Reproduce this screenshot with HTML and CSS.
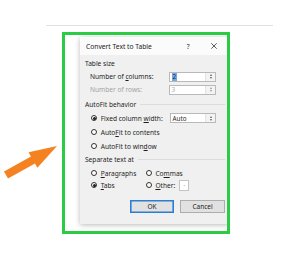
FILE: index.html
```html
<!DOCTYPE html>
<html>
<head>
<meta charset="utf-8">
<link rel="stylesheet" href="styles.css">
</head>
<body>
<div class="rule"></div>
<div class="frame">
  <div class="dialog">
    <div class="titlebar">
      <span class="title">Convert Text to Table</span>
      <span class="help">?</span>
      <svg class="close" width="6" height="6" viewBox="0 0 6 6"><path d="M0.3 0.3 L5.7 5.7 M5.7 0.3 L0.3 5.7" stroke="#333" stroke-width="0.8" fill="none"/></svg>
    </div>
    <div class="body">
      <div class="section">Table size</div>
      <div class="row">
        <span class="label">Number of <u>c</u>olumns:</span>
        <div class="spin"><div class="field"><span class="sel">2</span></div><div class="arrows"><i class="up"></i><i class="down"></i></div></div>
      </div>
      <div class="row disabled">
        <span class="label">Number of rows:</span>
        <div class="spin"><div class="field">3</div><div class="arrows"><i class="up"></i><i class="down"></i></div></div>
      </div>
      <div class="section gap"><span>AutoFit behavior</span><span class="line"></span></div>
      <div class="rrow">
        <span class="radio on"></span><span class="label">Fixed column <u>w</u>idth:</span>
        <div class="spin wide"><div class="field">Auto</div><div class="arrows"><i class="up"></i><i class="down"></i></div></div>
      </div>
      <div class="rrow"><span class="radio"></span><span class="label">Auto<u>F</u>it to contents</span></div>
      <div class="rrow"><span class="radio"></span><span class="label">AutoFit to win<u>d</u>ow</span></div>
      <div class="section"><span>Separate text at</span><span class="line"></span></div>
      <div class="grid">
        <div class="cell"><span class="radio"></span><span class="label"><u>P</u>aragraphs</span></div>
        <div class="cell"><span class="radio"></span><span class="label">Co<u>m</u>mas</span></div>
        <div class="cell"><span class="radio on"></span><span class="label"><u>T</u>abs</span></div>
        <div class="cell"><span class="radio"></span><span class="label"><u>O</u>ther:</span><span class="other">-</span></div>
      </div>
      <div class="buttons">
        <div class="btn ok">OK</div>
        <div class="btn">Cancel</div>
      </div>
    </div>
  </div>
</div>
<svg class="arrow" width="60" height="40" viewBox="0 144 60 40">
  <polygon points="57,146 28.6,152.2 31,156.5 4,171.5 8,178.5 35,163.5 37.4,167.8" fill="#f58220"/>
</svg>
</body>
</html>
```
FILE: styles.css
```css
html, body {
  margin: 0;
  padding: 0;
  background: #ffffff;
}
body {
  width: 300px;
  height: 273px;
  overflow: hidden;
  position: relative;
  font-family: "Noto Sans", "Open Sans", sans-serif;
  font-size: 6.6px;
  color: #1e1e1e;
}
.rule {
  margin: 25px 27px 0 46px;
  height: 1px;
  background: #e2e2e2;
}
.frame {
  margin: 6px 0 0 62px;
  width: 162px;
  height: 194px;
  border: 3px solid #2bcb45;
  padding: 2px 0 0 15px;
  box-sizing: content-box;
  width: 147px;
  overflow: hidden;
}
.dialog {
  width: 150px;
  height: 187px;
  background: #f0f0f0;
  box-shadow: 0 1px 5px rgba(0,0,0,0.28);
  display: flex;
  flex-direction: column;
}
.titlebar {
  height: 18px;
  background: #fbfbfb;
  display: flex;
  align-items: center;
  padding-left: 6px;
  font-size: 6.7px;
  color: #222;
}
.title { flex: 1; }
.help { margin-right: 21px; font-size: 6.5px; }
.close { margin-right: 13.5px; }
.body {
  flex: 1;
  padding: 2px 5px 0 5px;
  display: flex;
  flex-direction: column;
}
.section {
  height: 13px;
  display: flex;
  align-items: center;
  gap: 4px;
}
.section.gap { margin-top: 2px; }
.line {
  flex: 1;
  height: 1px;
  background: #dcdcdc;
}
.row {
  height: 13px;
  display: flex;
  align-items: center;
  padding-left: 5px;
}
.row .label { flex: 1; }
.disabled { color: #a3a3a3; }
.spin {
  width: 47px;
  height: 10px;
  display: flex;
  margin-right: 9px;
  border: 1px solid #b9b9b9;
  box-sizing: border-box;
  background: #fff;
}
.spin.wide { width: 46px; }
.field {
  flex: 1;
  display: flex;
  align-items: center;
  padding-left: 1.5px;
  font-size: 6.3px;
}
.sel {
  background: #74a9e4;
  color: #0c2a55;
  padding: 0 1px;
  line-height: 8px;
}
.disabled .field { color: #a8a8a8; }
.arrows {
  width: 9px;
  background: #f3f3f3;
  border-left: 1px solid #e3e3e3;
  display: flex;
  flex-direction: column;
  align-items: center;
  justify-content: center;
  gap: 1px;
}
.arrows i {
  width: 0;
  height: 0;
  border-left: 1.5px solid transparent;
  border-right: 1.5px solid transparent;
}
.arrows .up { border-bottom: 2px solid #606060; }
.arrows .down { border-top: 2px solid #606060; }
.disabled .arrows .up { border-bottom-color: #9a9a9a; }
.disabled .arrows .down { border-top-color: #9a9a9a; }
.rrow {
  height: 14px;
  display: flex;
  align-items: center;
  padding-left: 6px;
}
.rrow .label { flex: 1; }
.radio {
  width: 6px;
  height: 6px;
  border: 0.8px solid #333;
  border-radius: 50%;
  box-sizing: border-box;
  background: #fff;
  margin-right: 3.7px;
  display: flex;
  align-items: center;
  justify-content: center;
  flex: none;
}
.radio.on::after {
  content: "";
  width: 3px;
  height: 3px;
  border-radius: 50%;
  background: #1e1e1e;
}
.grid {
  display: grid;
  grid-template-columns: 54.7px 1fr;
  grid-auto-rows: 12px;
  padding-left: 6px;
  margin-top: 1px;
}
.cell {
  display: flex;
  align-items: center;
}
.other {
  width: 10px;
  height: 11px;
  margin-left: 4px;
  border: 1px solid #c4c4c4;
  box-sizing: border-box;
  background: #fff;
  font-size: 5px;
  color: #666;
  display: flex;
  align-items: center;
  justify-content: center;
}
.buttons {
  margin-top: 9px;
  display: flex;
  justify-content: flex-end;
  gap: 6px;
}
.btn {
  width: 45px;
  height: 13px;
  background: #e1e1e1;
  border: 1px solid #adadad;
  box-sizing: border-box;
  display: flex;
  align-items: center;
  justify-content: center;
  font-size: 6.5px;
}
.btn.ok {
  width: 44px;
  border: 1px solid #2a7fd4;
  box-shadow: inset 0 0 0 0.6px #2a7fd4;
}
.arrow {
  position: absolute;
  left: 0;
  top: 144px;
}
```
